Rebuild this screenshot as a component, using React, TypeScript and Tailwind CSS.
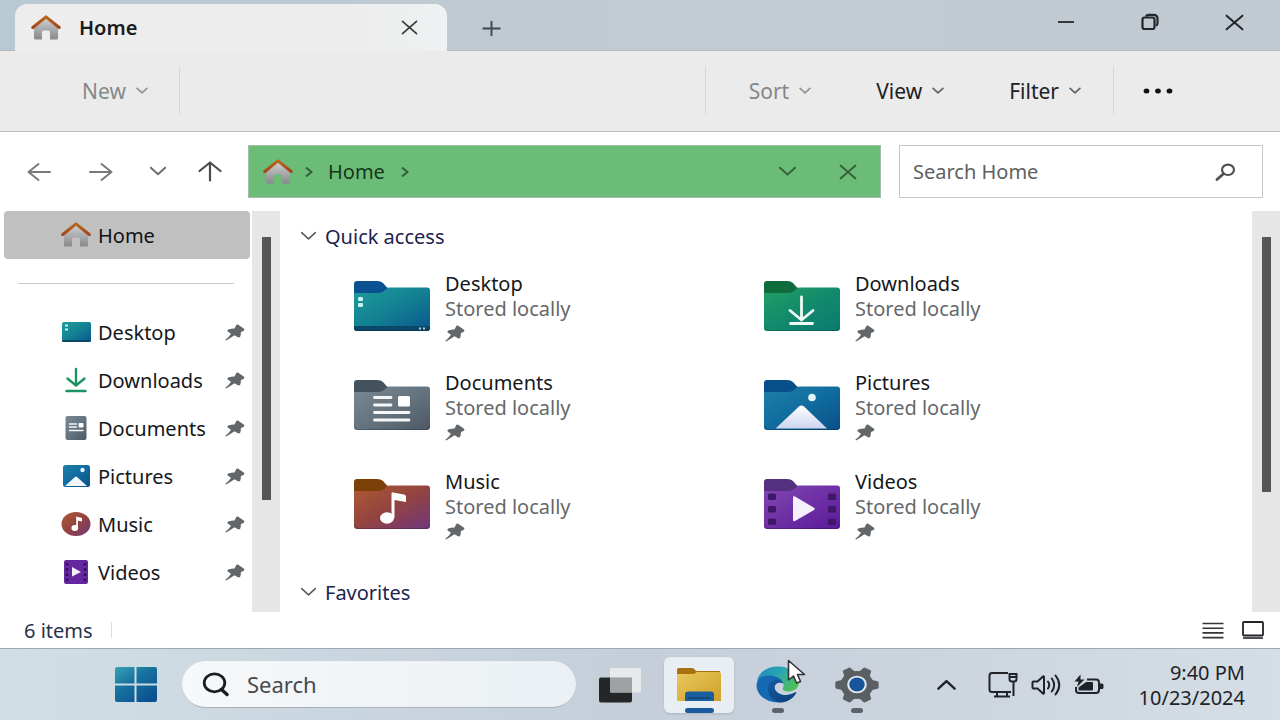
import type { ReactNode } from 'react';

type Kind = 'desktop' | 'downloads' | 'documents' | 'pictures' | 'music' | 'videos';

const PLACES: { kind: Kind; name: string }[] = [
  { kind: 'desktop', name: 'Desktop' },
  { kind: 'downloads', name: 'Downloads' },
  { kind: 'documents', name: 'Documents' },
  { kind: 'pictures', name: 'Pictures' },
  { kind: 'music', name: 'Music' },
  { kind: 'videos', name: 'Videos' },
];

// back = the folder tab, from/to = gradient of the front
const FOLDER_COLORS: Record<Kind, { back: string; from: string; mid: string; to: string }> = {
  desktop: { back: '#0a5192', from: '#1f9c9c', mid: '#128192', to: '#0b5590' },
  downloads: { back: '#0e6b3c', from: '#239f64', mid: '#128a6c', to: '#0a7a70' },
  documents: { back: '#43525d', from: '#7a8894', mid: '#66747f', to: '#4c5965' },
  pictures: { back: '#08508c', from: '#2080a8', mid: '#106c9e', to: '#0b4f88' },
  music: { back: '#7d3f08', from: '#ae5a33', mid: '#934340', to: '#6f377c' },
  videos: { back: '#553080', from: '#8148b2', mid: '#6e30a4', to: '#5a1b99' },
};

function HomeIcon() {
  return (
    <svg width="30" height="26" viewBox="0 0 30 26" aria-hidden="true">
      <defs>
        <linearGradient id="wall" x1="0" y1="0" x2="0" y2="1">
          <stop offset="0" stopColor="#cfcfd1" />
          <stop offset="1" stopColor="#88898c" />
        </linearGradient>
        <linearGradient id="roof" x1="0" y1="0" x2="0" y2="1">
          <stop offset="0" stopColor="#b8691c" />
          <stop offset="1" stopColor="#a4441a" />
        </linearGradient>
      </defs>
      <path d="M15 3 27 13V23Q27 24.500 25.500 24.500H19V17Q19 15.500 17.500 15.500H12.500Q11 15.500 11 17V24.500H4.500Q3 24.500 3 23V13Z" fill="url(#wall)" />
      <path d="M1.800 12.500 15 1.800 28.200 12.500" fill="none" stroke="url(#roof)" strokeWidth="3" strokeLinecap="round" strokeLinejoin="round" />
    </svg>
  );
}

function Pin() {
  return (
    <svg width="20" height="17" viewBox="0 0 20 17" aria-hidden="true">
      <path
        d="M11.500 .8Q12.300 .2 13.300 .8L18.700 4.400Q20 5.300 19.200 6.300L18.500 7 16 8 15.500 12Q15 14 13 13.200L9.500 11.200 4.500 14.500 1 16.500 .3 15.700 3.500 13 6 9.800 3 7.800Q1.500 6.400 3.200 5.500 6.500 4.500 9.500 4.600Z"
        fill="#63676a"
      />
    </svg>
  );
}

function Chevron({ size = 12, width = 1.5 }: { size?: number; width?: number }) {
  return (
    <svg width={size} height={size / 2 + 2} viewBox="0 0 16 10" fill="none" aria-hidden="true">
      <path d="M1.500 1.500 8 7.500 14.500 1.500" stroke="currentColor" strokeWidth={width} strokeLinecap="round" strokeLinejoin="round" vectorEffect="non-scaling-stroke" />
    </svg>
  );
}

function Crumb() {
  return (
    <svg width="8" height="12" viewBox="0 0 8 12" fill="none" aria-hidden="true">
      <path d="M1 1.500 6.500 6 1 10.500" stroke="#2f5c37" strokeWidth="1.800" />
    </svg>
  );
}

function Cross({ size = 18, width = 1.8 }: { size?: number; width?: number }) {
  return (
    <svg width={size} height={size - 2} viewBox="0 0 18 16" fill="none" aria-hidden="true">
      <path d="M1.500 1.500 16.500 14.500M16.500 1.500 1.500 14.500" stroke="currentColor" strokeWidth={width} strokeLinecap="round" />
    </svg>
  );
}

function Emblem({ kind }: { kind: Kind }) {
  switch (kind) {
    case 'desktop':
      return (
        <>
          <path d="M1 46H77V48Q77 51 74 51H4Q1 51 1 48Z" fill="#0b4766" />
          <rect x="5" y="17" width="5" height="4" rx="1" fill="#c8f4f2" />
          <rect x="5" y="23" width="5" height="4" rx="1" fill="#c8f4f2" />
          <rect x="66" y="47.500" width="2" height="2" fill="#b4c8dc" />
          <rect x="70" y="47.500" width="2" height="2" fill="#b4c8dc" />
        </>
      );
    case 'downloads':
      return (
        <path d="M38.500 17V40M27 30.500 38.500 40 50 30.500M27.500 43.500H49.500" fill="none" stroke="#eefaf3" strokeWidth="2.800" strokeLinecap="round" strokeLinejoin="round" />
      );
    case 'documents':
      return (
        <>
          <path d="M21.500 18.500H38M21.500 26H38M21.500 33.500H56M21.500 41H56" stroke="#f4f6f8" strokeWidth="2.800" strokeLinecap="round" />
          <rect x="45" y="17" width="12" height="10.500" rx="1.500" fill="#fff" />
        </>
      );
    case 'pictures':
      return (
        <>
          <circle cx="49" cy="18.500" r="3.800" fill="#e4f2fa" />
          <path d="M12.500 49.500 36 27.500Q38.500 25.500 41 27.500L64 49.500Z" fill="url(#snow)" />
        </>
      );
    case 'music':
      return (
        <>
          <path d="M38.500 15.500Q38.500 14 40 14.400L51 16.500Q53 17 53 18.500V24L41.500 22V40H38.500Z" fill="#fff" />
          <ellipse cx="34" cy="40" rx="7" ry="5.800" fill="#fff" />
        </>
      );
    case 'videos':
      return (
        <>
          {[15.5, 28, 40.5].map((y) => (
            <g key={y} fill="#3f1768">
              <rect x="5" y={y} width="8" height="6.500" rx="1.500" />
              <rect x="65" y={y} width="8" height="6.500" rx="1.500" />
            </g>
          ))}
          <path d="M30 19.500Q30 17.500 32 18.500L51 29.800Q52.500 31 51 32L32 43Q30 44 30 42Z" fill="#f6effc" />
        </>
      );
  }
}

function Folder({ kind }: { kind: Kind }) {
  const c = FOLDER_COLORS[kind];
  return (
    <svg width="78" height="52" viewBox="0 0 78 52" className="shrink-0" aria-hidden="true">
      <defs>
        <linearGradient id={`f-${kind}`} x1="0" y1="0" x2="1" y2="1">
          <stop offset="0" stopColor={c.from} />
          <stop offset=".5" stopColor={c.mid} />
          <stop offset="1" stopColor={c.to} />
        </linearGradient>
        <linearGradient id="snow" x1="0" y1="0" x2="0" y2="1">
          <stop offset="0" stopColor="#fff" />
          <stop offset="1" stopColor="#cdd5ee" />
        </linearGradient>
      </defs>
      <path d="M1 18V4Q1 1 4 1H24Q28 1 30 3L34 7.500 40 9V18Z" fill={c.back} />
      <path d="M1 13H25Q29 13 31 11L34 8.500Q35 7.500 37 7.500H74Q77 7.500 77 10.500V48Q77 51 74 51H4Q1 51 1 48Z" fill={`url(#f-${kind})`} />
      <Emblem kind={kind} />
      <path d="M1.500 47Q1.500 50.500 5 50.500H73Q76.500 50.500 76.500 47" fill="none" stroke="#0003" />
    </svg>
  );
}

const SMALL: Record<Kind, ReactNode> = {
  desktop: (
    <>
      <rect x="1" y="3" width="29" height="20" rx="2" fill="url(#f-desktop)" />
      <path d="M1 21H30V21.500Q30 23 28.500 23H2.500Q1 23 1 21.500Z" fill="#0b4766" />
      <path d="M4 6.500H7M4 10.500H7" stroke="#c8f4f2" strokeWidth="2" />
    </>
  ),
  downloads: (
    <path d="M15 2V18M6.500 11.500 15 18.500 23.500 11.500M5.500 24H24.500" fill="none" stroke="#1d9363" strokeWidth="2.400" strokeLinecap="round" strokeLinejoin="round" />
  ),
  documents: (
    <>
      <rect x="4.500" y="1" width="21" height="24" rx="2" fill="url(#f-documents)" />
      <path d="M8.500 9H15.500M8.500 12H15.500M8.500 15.500H22" stroke="#f4f6f8" strokeWidth="1.400" strokeLinecap="round" />
      <rect x="17.500" y="8" width="5" height="4.500" rx="1" fill="#fff" />
    </>
  ),
  pictures: (
    <>
      <rect x="2" y="2" width="27" height="22" rx="2.500" fill="url(#f-pictures)" />
      <circle cx="21.500" cy="7" r="2.200" fill="#e4f2fa" />
      <path d="M4 23 14 14Q15 13.200 16 14L26 23Z" fill="#f3f6fc" />
    </>
  ),
  music: (
    <>
      <ellipse cx="15" cy="13" rx="14.500" ry="12" fill="url(#f-music)" />
      <path d="M15.200 5.500 21 7V10.500L17 9.800V17H15.200Z" fill="#fff" />
      <ellipse cx="13.800" cy="17" rx="3.400" ry="2.900" fill="#fff" />
    </>
  ),
  videos: (
    <>
      <rect x="3" y="1" width="24" height="24" rx="2" fill="#6427a0" />
      <path d="M6 4V23M24 4V23" stroke="#30104f" strokeWidth="2.400" strokeDasharray="2.600 2.600" />
      <path d="M11 8 20 13 11 17.500Z" fill="#f6effc" />
    </>
  ),
};

function ToolButton({ children, muted }: { children: string; muted?: boolean }) {
  return (
    <button className={`flex items-center gap-2.5 text-[21px] ${muted ? 'text-[#85878a]' : 'text-[#202124]'}`}>
      {children}
      <span className={muted ? 'text-[#949698]' : 'text-[#66686a]'}>
        <Chevron size={12} width={1.8} />
      </span>
    </button>
  );
}

function Divider() {
  return <div className="h-12 w-px bg-[#d6d7d8]" />;
}

function ScrollTrack({ thumb }: { thumb: string }) {
  return (
    <div className="flex w-7 shrink-0 flex-col items-center bg-[#e6e6e6] pt-[26px]">
      <div className={`w-[9px] bg-[#555657] ${thumb}`} />
    </div>
  );
}

function SectionHead({ children }: { children: string }) {
  return (
    <button className="flex h-12 items-center gap-2 text-[#1c2450]">
      <span className="text-[#55585c]">
        <Chevron size={17} />
      </span>
      <h2>{children}</h2>
    </button>
  );
}

function TaskButton({ label, active, running, children }: { label: string; active?: boolean; running?: boolean; children: ReactNode }) {
  return (
    <button aria-label={label} className={`relative flex h-14 w-[70px] shrink-0 items-center justify-center rounded-md ${active ? 'bg-[#e9eef3] shadow-sm' : ''}`}>
      {children}
      {active && <span className="absolute bottom-0 h-[5px] w-[29px] rounded-full bg-[#1a5c9f]" />}
      {running && <span className="absolute bottom-0 h-[5px] w-3 rounded-full bg-[#5d636b]" />}
    </button>
  );
}

function TitleBar() {
  return (
    <header className="flex h-[51px] items-end border-b border-[#b4babf] bg-linear-to-r from-[#b9c9d3] via-[#c2cad2] to-[#c1c9d1]">
      <div className="-mb-px ml-[15px] flex h-[47px] w-[432px] items-center rounded-t-xl bg-linear-to-r from-[#ededed] from-80% to-[#eef2f2] pr-[29px] pl-4">
        <HomeIcon />
        <span className="ml-[18px] flex-1 font-semibold text-[#1a1b1d]">Home</span>
        <button aria-label="Close tab" className="text-[#37393c]">
          <Cross size={17} />
        </button>
      </div>
      <button aria-label="New tab" className="mb-3 ml-[35px] text-[#43484e]">
        <svg width="19" height="19" viewBox="0 0 19 19" aria-hidden="true">
          <path d="M9.500 2V17M.5 9.500H18.500" stroke="currentColor" strokeWidth="1.900" />
        </svg>
      </button>
      <div className="mr-1 ml-auto flex h-11 self-start text-[#22272b]">
        <button aria-label="Minimize" className="flex w-[84px] items-center justify-center">
          <svg width="18" height="4" viewBox="0 0 18 4" aria-hidden="true">
            <path d="M1 2H17" stroke="currentColor" strokeWidth="1.800" />
          </svg>
        </button>
        <button aria-label="Restore" className="flex w-[84px] items-center justify-center">
          <svg width="18" height="18" viewBox="0 0 18 18" fill="none" stroke="currentColor" strokeWidth="2.200" aria-hidden="true">
            <rect x="1.500" y="4.500" width="12" height="11.500" rx="2" />
            <path d="M5 3.500Q5.500 1.800 8 1.800H12.500Q16.500 1.800 16.500 5.500V10Q16.500 12 15 12.800" />
          </svg>
        </button>
        <button aria-label="Close" className="flex w-[84px] items-center justify-center">
          <Cross size={19} width={1.9} />
        </button>
      </div>
    </header>
  );
}

function CommandBar() {
  return (
    <div className="flex h-[81px] items-center border-b border-[#b9bbbc] bg-[#ebebeb]">
      <div className="flex w-[179px] justify-end pr-[31px]">
        <ToolButton muted>New</ToolButton>
      </div>
      <Divider />
      <div className="ml-auto flex items-center">
        <Divider />
        <div className="flex items-center gap-[65px] pr-8 pl-[43px]">
          <ToolButton muted>Sort</ToolButton>
          <ToolButton>View</ToolButton>
          <ToolButton>Filter</ToolButton>
        </div>
        <Divider />
        <button aria-label="See more" className="mr-[107px] ml-[29px]">
          <svg width="30" height="6" viewBox="0 0 30 6" fill="#111214" aria-hidden="true">
            <ellipse cx="3.500" cy="3" rx="2.900" ry="2.500" />
            <ellipse cx="15" cy="3" rx="2.900" ry="2.500" />
            <ellipse cx="26.500" cy="3" rx="2.900" ry="2.500" />
          </svg>
        </button>
      </div>
    </div>
  );
}

function AddressBar() {
  return (
    <div className="flex h-[79px] items-center pr-[17px] pl-2">
      <button aria-label="Back" className="flex w-[62px] justify-center">
        <svg width="24" height="20" viewBox="0 0 24 20" fill="none" stroke="#77797b" strokeWidth="2" strokeLinecap="round" strokeLinejoin="round" aria-hidden="true">
          <path d="M23 10H1.500M11.500 2 1.500 10 11.500 18" />
        </svg>
      </button>
      <button aria-label="Forward" className="flex w-[62px] justify-center">
        <svg width="24" height="20" viewBox="0 0 24 20" fill="none" stroke="#77797b" strokeWidth="2" strokeLinecap="round" strokeLinejoin="round" aria-hidden="true">
          <path d="M1 10H22.500M12.500 2 22.500 10 12.500 18" />
        </svg>
      </button>
      <button aria-label="Recent locations" className="flex w-[52px] justify-center text-[#6c6e70]">
        <Chevron size={18} width={2} />
      </button>
      <button aria-label="Up" className="flex w-[52px] justify-center">
        <svg width="24" height="21" viewBox="0 0 24 21" fill="none" stroke="#4a4c4e" strokeWidth="2.200" strokeLinecap="round" strokeLinejoin="round" aria-hidden="true">
          <path d="M12 19.500V1.500M1.500 10 12 1.500 22.500 10" />
        </svg>
      </button>
      <nav aria-label="Address" className="ml-3 flex h-[53px] flex-1 items-center border border-[#a3bda6] bg-[#6bbc77] pl-3.5 text-[#14361a]">
        <HomeIcon />
        <span className="ml-3">
          <Crumb />
        </span>
        <a href="#home" className="ml-[15px]">Home</a>
        <span className="ml-4">
          <Crumb />
        </span>
        <button aria-label="Previous locations" className="ml-auto text-[#33603b]">
          <Chevron size={19} width={2} />
        </button>
        <button aria-label="Stop" className="mr-[23px] ml-[42px] text-[#33603b]">
          <Cross size={18} />
        </button>
      </nav>
      <label className="ml-[18px] flex h-[53px] w-[364px] items-center border border-[#c6c7c8] bg-white pr-[26px] pl-[13px]">
        <input type="text" aria-label="Search Home" placeholder="Search Home" className="min-w-0 flex-1 outline-none placeholder:text-[#5d5f61]" />
        <svg width="21" height="18" viewBox="0 0 21 18" fill="none" stroke="#4e5052" strokeLinecap="round" aria-hidden="true">
          <ellipse cx="13" cy="6.800" rx="6" ry="5.200" strokeWidth="2.200" />
          <path d="M8.500 10.800 2 16.500" strokeWidth="2.800" />
        </svg>
      </label>
    </div>
  );
}

function Sidebar() {
  return (
    <aside className="flex w-[252px] shrink-0 flex-col">
      <a href="#home" className="mr-0.5 ml-1 flex h-12 shrink-0 items-center gap-[7px] rounded-sm bg-[#c0c0c0] pl-[57px] text-[#111214]">
        <HomeIcon />
        Home
      </a>
      <hr className="mx-[18px] my-6 border-[#c9cacb]" />
      <ul>
        {PLACES.map((p) => (
          <li key={p.kind}>
            <a href={`#${p.kind}`} className="flex h-12 items-center gap-[7px] pr-[7px] pl-[61px] text-[#16171a]">
              <svg width="30" height="26" viewBox="0 0 30 26" aria-hidden="true">
                {SMALL[p.kind]}
              </svg>
              <span className="flex-1">{p.name}</span>
              <Pin />
            </a>
          </li>
        ))}
      </ul>
    </aside>
  );
}

function Content() {
  return (
    <main className="min-w-0 flex-1 overflow-hidden pt-px pl-5">
      <SectionHead>Quick access</SectionHead>
      <ul className="mt-[11px] grid grid-cols-[410px_410px] pl-[53px]">
        {PLACES.map((p) => (
          <li key={p.kind} className="flex h-[99px] gap-3.5">
            <div className="mt-[9px]">
              <Folder kind={p.kind} />
            </div>
            <div>
              <a href={`#${p.kind}`} className="block text-[#16171a]">{p.name}</a>
              <p className="mb-1 text-[#66686a]">Stored locally</p>
              <Pin />
            </div>
          </li>
        ))}
      </ul>
      <SectionHead>Favorites</SectionHead>
    </main>
  );
}

function StatusBar() {
  return (
    <footer className="flex h-9 shrink-0 items-center pr-4 pl-6 text-[#26324a]">
      <span>6 items</span>
      <div className="ml-[18px] h-4 w-px bg-[#dcdddf]" />
      <button aria-label="Details view" className="ml-auto">
        <svg width="22" height="17" viewBox="0 0 22 17" stroke="#333538" strokeWidth="1.600" aria-hidden="true">
          <path d="M.5 1.500H21.500M.5 6.200H21.500M.5 10.900H21.500M.5 15.600H21.500" />
        </svg>
      </button>
      <button aria-label="Large icons view" className="ml-[18px]">
        <svg width="22" height="18" viewBox="0 0 22 18" fill="none" stroke="#222427" strokeWidth="1.800" aria-hidden="true">
          <rect x="1" y="1" width="20" height="13.500" rx="1" />
          <path d="M1 17H21" strokeWidth="1.600" />
        </svg>
      </button>
    </footer>
  );
}

function EdgeIcon() {
  return (
    <svg width="44" height="37" viewBox="0 0 44 37" aria-hidden="true">
      <defs>
        <linearGradient id="e-top" x1="0" y1="0" x2="1" y2=".6">
          <stop offset="0" stopColor="#1b86b8" />
          <stop offset=".5" stopColor="#2ba6b4" />
          <stop offset="1" stopColor="#4cbf56" />
        </linearGradient>
        <linearGradient id="e-low" x1="0" y1="0" x2="1" y2="1">
          <stop offset="0" stopColor="#155c9f" />
          <stop offset="1" stopColor="#0c3f7a" />
        </linearGradient>
      </defs>
      <path d="M1 15C3 6 11 .5 22 .5 34 .5 43 8 43 16 43 22 38 25.500 33 25.500 28 25.500 26 24 27 22 29 18 26 13 19 11.500 12 10 4 11 1 15Z" fill="url(#e-top)" />
      <path d="M.5 19C1 12 7 9 14 9.500 22 10 27 14 27 17.500 24 15.500 19 17 18.500 21 18.500 26 24 29.500 31 29 35 28.500 38 27 40.500 26 38 32 31 36.500 22 36.500 10 36.500.5 29 .5 19Z" fill="#1569b4" />
      <path d="M12 23C12 17.500 16 13.500 21 13.500 24 13.500 26.500 15.500 27 17.500 24 15.500 19 17 18.500 21 18.500 26 24 29.500 31 29 35 28.500 38 27 40.500 26 38 32 31 36.500 25 36.500 16 35.500 12 29 12 23Z" fill="url(#e-low)" />
    </svg>
  );
}

function GearIcon() {
  return (
    <svg width="44" height="38" viewBox="0 0 44 38" aria-hidden="true">
      <g fill="#5a5f64">
        <ellipse cx="22" cy="19" rx="16.500" ry="14" />
        {[30, 90, 150].map((a) => (
          <path key={a} transform={`translate(22 19) scale(1.170 1) rotate(${a})`} d="M-3.800-17.500Q-3.600-18.500-2.600-18.500H2.600Q3.600-18.500 3.800-17.500L5.500-11V11L3.800 17.500Q3.600 18.500 2.600 18.500H-2.600Q-3.600 18.500-3.800 17.500L-5.500 11V-11Z" />
        ))}
      </g>
      <ellipse cx="22" cy="18.500" rx="9.800" ry="8.800" fill="#e4eaf0" />
      <ellipse cx="22" cy="18.500" rx="7.700" ry="7" fill="#17549a" />
    </svg>
  );
}

function Taskbar() {
  return (
    <div className="flex h-[72px] shrink-0 items-center gap-[9px] border-t border-[#a0a8af] bg-linear-to-r from-[#d0dfe6] via-[#c5ced9] to-[#d5dee5] pr-[35px] pl-[101px]">
      <TaskButton label="Start">
        <svg width="44" height="37" viewBox="0 0 44 37" aria-hidden="true">
          <defs>
            <linearGradient id="win" x1="0" y1="0" x2=".8" y2="1">
              <stop offset="0" stopColor="#3aa3b5" />
              <stop offset=".45" stopColor="#16719f" />
              <stop offset="1" stopColor="#0c4f90" />
            </linearGradient>
          </defs>
          <path d="M3 1H20.500V17.500H1V3Q1 1 3 1ZM22.500 1H41Q43 1 43 3V17.500H22.500ZM1 19.500H20.500V36H3Q1 36 1 34ZM22.500 19.500H43V34Q43 36 41 36H22.500Z" fill="url(#win)" />
        </svg>
      </TaskButton>
      <label className="ml-0.5 flex h-[47px] w-[394px] items-center gap-[18px] rounded-full border-b border-[#a9b1b9] bg-linear-to-r from-[#f7f8fa] to-[#eaf0f4] pl-5">
        <svg width="27" height="25" viewBox="0 0 27 25" fill="none" stroke="#1b1d20" aria-hidden="true">
          <ellipse cx="12.500" cy="10.800" rx="10.300" ry="9" strokeWidth="2.800" />
          <path d="M19.500 17.500 25 22.500" strokeWidth="3.400" strokeLinecap="round" />
        </svg>
        <input type="text" aria-label="Search" placeholder="Search" className="min-w-0 flex-1 text-[22px] outline-none placeholder:text-[#47494c]" />
      </label>
      <TaskButton label="Task view">
        <svg width="44" height="36" viewBox="0 0 44 36" aria-hidden="true">
          <rect x="1" y="10.500" width="33" height="25" rx="2" fill="#252628" />
          <rect x="12" y="1" width="31" height="24.500" rx="1.500" fill="#eceded" fillOpacity=".85" />
          <rect x="12" y="10.500" width="22" height="15" fill="#a0a1a3" />
        </svg>
      </TaskButton>
      <TaskButton label="File Explorer" active>
        <svg width="46" height="36" viewBox="0 0 46 36" aria-hidden="true">
          <defs>
            <linearGradient id="yellow" x1="0" y1="0" x2="1" y2="1">
              <stop offset="0" stopColor="#e9c95d" />
              <stop offset="1" stopColor="#cf9f28" />
            </linearGradient>
          </defs>
          <path d="M1 8V3Q1 1 3 1H16Q18 1 20 4H44V10H1Z" fill="#a9710f" />
          <path d="M1 7H18L21 5H43Q45 5 45 7V34H1Z" fill="url(#yellow)" />
          <path d="M9 34V27.500Q9 24.500 12 24.500H35Q38 24.500 38 27.500V34Z" fill="#195f9c" />
          <path d="M13 31H34" stroke="#124b80" strokeWidth="2" strokeLinecap="round" />
        </svg>
      </TaskButton>
      <TaskButton label="Edge" running>
        <EdgeIcon />
        {/* mouse pointer resting on the icon */}
        <svg width="20" height="26" viewBox="0 0 20 26" className="absolute top-0.5 left-[44px]" aria-hidden="true">
          <path d="M1.500 1.500V21L6.500 17 9.500 24 13.500 22.500 10.500 15.500H17.500Z" fill="#fff" stroke="#33363a" strokeWidth="1.600" strokeLinejoin="round" />
        </svg>
      </TaskButton>
      <TaskButton label="Settings" running>
        <GearIcon />
      </TaskButton>
      <div className="ml-auto flex items-center text-[#202327]">
        <button aria-label="Show hidden icons" className="mr-[31px] rotate-180">
          <Chevron size={21} width={2.4} />
        </button>
        <button aria-label="Network, volume and battery" className="flex items-center gap-[13px]">
          <svg width="30" height="27" viewBox="0 0 30 27" fill="none" stroke="currentColor" strokeWidth="2" aria-hidden="true">
            <path d="M20 2H4Q1.500 2 1.500 4.500V18.500Q1.500 21 4 21H23M9 21V25M19 21V25M6 25.500H22" />
            <path d="M21.500 3H28.500V8Q28.500 10.500 26 10.500H24Q21.500 10.500 21.500 8ZM21.500 6H28.500M25.500 10.500V25" />
          </svg>
          <svg width="30" height="22" viewBox="0 0 30 22" fill="none" stroke="currentColor" strokeWidth="2" strokeLinecap="round" strokeLinejoin="round" aria-hidden="true">
            <path d="M1.500 8.500Q1.500 7.500 2.500 7.500H6.500L12 2.500Q13 2 13 3V19Q13 20 12 19.500L6.500 14.500H2.500Q1.500 14.500 1.500 13.500Z" />
            <path d="M17 7.500Q19.500 11 17 14.500M20.800 4.500Q25.500 11 20.800 17.500M24.500 1.500Q32 11 24.500 20.500" />
          </svg>
          <svg width="30" height="22" viewBox="0 0 30 22" aria-hidden="true">
            <path d="M13 5.500H22Q25 5.500 25 8.500V16Q25 19 22 19H5Q2 19 2 16V13" fill="none" stroke="currentColor" strokeWidth="2" />
            <path d="M12 8H18Q19 8 19 9V15.500Q19 16.500 18 16.500H5.500Q4.500 16.500 4.500 15.500V13.500L8 11ZM26 9.500H28Q29.500 9.500 29.500 11V13.500Q29.500 15 28 15H26Z" fill="currentColor" />
            <path d="M6.500 .5 .5 7.500H4.500L3 13 10.500 5.500H6.500Z" fill="currentColor" />
          </svg>
        </button>
        <div className="min-w-[141px] text-right">
          <div>9:40 PM</div>
          <div>10/23/2024</div>
        </div>
      </div>
    </div>
  );
}

export default function App() {
  return (
    <div className="flex h-screen flex-col overflow-hidden bg-white font-['Noto_Sans','Open_Sans',sans-serif] text-[20px] leading-[25px]">
      <TitleBar />
      <CommandBar />
      <AddressBar />
      <div className="flex min-h-0 flex-1">
        <Sidebar />
        <ScrollTrack thumb="h-[70%]" />
        <Content />
        <ScrollTrack thumb="h-[68%]" />
      </div>
      <StatusBar />
      <Taskbar />
    </div>
  );
}
